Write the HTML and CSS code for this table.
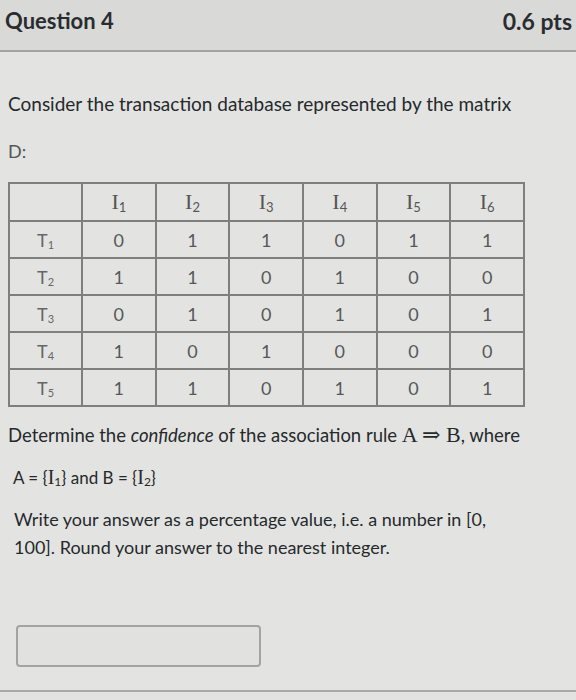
FILE: index.html
```html
<!DOCTYPE html>
<html lang="en">
<head>
<meta charset="utf-8">
<title>Question 4</title>
<link rel="stylesheet" href="styles.css">
</head>
<body>
<div class="question">
  <header class="q-header">
    <h2 class="q-title">Question 4</h2>
    <span class="q-pts">0.6 pts</span>
  </header>
  <div class="q-body">
    <p class="intro">Consider the transaction database represented by the matrix</p>
    <p class="dlabel">D:</p>
    <table class="matrix">
      <thead>
        <tr>
          <th class="corner"></th>
          <th><span class="mi">I<sub>1</sub></span></th>
          <th><span class="mi">I<sub>2</sub></span></th>
          <th><span class="mi">I<sub>3</sub></span></th>
          <th><span class="mi">I<sub>4</sub></span></th>
          <th><span class="mi">I<sub>5</sub></span></th>
          <th><span class="mi">I<sub>6</sub></span></th>
        </tr>
      </thead>
      <tbody>
        <tr><td class="rl">T<sub>1</sub></td><td>0</td><td>1</td><td>1</td><td>0</td><td>1</td><td>1</td></tr>
        <tr><td class="rl">T<sub>2</sub></td><td>1</td><td>1</td><td>0</td><td>1</td><td>0</td><td>0</td></tr>
        <tr><td class="rl">T<sub>3</sub></td><td>0</td><td>1</td><td>0</td><td>1</td><td>0</td><td>1</td></tr>
        <tr><td class="rl">T<sub>4</sub></td><td>1</td><td>0</td><td>1</td><td>0</td><td>0</td><td>0</td></tr>
        <tr><td class="rl">T<sub>5</sub></td><td>1</td><td>1</td><td>0</td><td>1</td><td>0</td><td>1</td></tr>
      </tbody>
    </table>
    <p class="rule">Determine the <em>confidence</em> of the association rule <span class="math">A ⇒ B</span>, where</p>
    <p class="sets">A = {<span class="mi-s">I<sub>1</sub></span>} and B = {<span class="mi-s">I<sub>2</sub></span>}</p>
    <p class="instr">Write your answer as a percentage value, i.e. a number in [0,<br>100]. Round your answer to the nearest integer.</p>
    <div class="answer"><input class="answer-input" type="text" aria-label="answer"></div>
  </div>
</div>
</body>
</html>
```

FILE: styles.css
```css
html, body {
  margin: 0;
  padding: 0;
}
body {
  background: #e3e4e2;
  font-family: Lato, "Liberation Sans", sans-serif;
  color: #26292c;
  width: 576px;
  height: 700px;
  overflow: hidden;
}
.question {
  height: 692px;
  border-bottom: 2px solid #a9aaa8;
  box-sizing: border-box;
}
.q-header {
  height: 52px;
  box-sizing: border-box;
  background: #d9dad8;
  border-bottom: 2px solid #a3a4a2;
  display: flex;
  justify-content: space-between;
  align-items: flex-start;
  padding: 7px 4px 0 5px;
}
.q-title {
  margin: 0;
  font-size: 22px;
  line-height: 28px;
  font-weight: 700;
  color: #2a2d30;
}
.q-pts {
  font-size: 23px;
  line-height: 28px;
  font-weight: 700;
  color: #2a2d30;
}
.q-body {
  padding: 0 0 0 8px;
}
.q-body p {
  margin: 0;
  font-size: 18px;
  line-height: 28px;
}
.q-body .intro {
  padding-top: 38px;
  font-size: 19px;
}
.q-body .dlabel {
  margin-top: 19px;
  color: #555;
}
.matrix {
  margin-top: 17px;
  border-collapse: collapse;
  width: 517px;
  table-layout: fixed;
  color: #55585a;
  font-size: 18px;
}
.matrix th, .matrix td {
  border: 2px solid #7f807e;
  text-align: center;
  padding: 0;
}
.matrix th {
  height: 36px;
  font-weight: 400;
}
.matrix td {
  height: 35px;
}
.matrix th.corner {
  width: 71px;
}
.mi {
  font-family: "Liberation Serif", "DejaVu Serif", serif;
  font-size: 22px;
  color: #555;
}
.mi sub {
  font-family: Lato, "Liberation Sans", sans-serif;
  font-size: 13px;
}
.rl {
  color: #666;
}
.rl sub {
  font-size: 11px;
}
sub {
  line-height: 0;
  vertical-align: -0.2em;
}
.q-body .rule {
  margin-top: 14px;
  font-size: 18.5px;
}
.rule em {
  font-style: italic;
}
.math {
  font-family: "Liberation Serif", "DejaVu Serif", serif;
  font-size: 22px;
}
.q-body .sets {
  margin-top: 14px;
  font-size: 17px;
  padding-left: 5px;
}
.mi-s {
  font-family: "Liberation Serif", "DejaVu Serif", serif;
  font-size: 20px;
}
.mi-s sub {
  font-family: Lato, "Liberation Sans", sans-serif;
  font-size: 12px;
}
.q-body .instr {
  margin-top: 13px;
  padding-left: 6px;
}
.answer {
  margin-top: 64px;
  padding-left: 8px;
}
.answer-input {
  display: block;
  width: 245px;
  height: 42px;
  box-sizing: border-box;
  border: 2px solid #a3a4a2;
  border-radius: 4px;
  background: #e1e2e0;
  margin: 0;
}
```
